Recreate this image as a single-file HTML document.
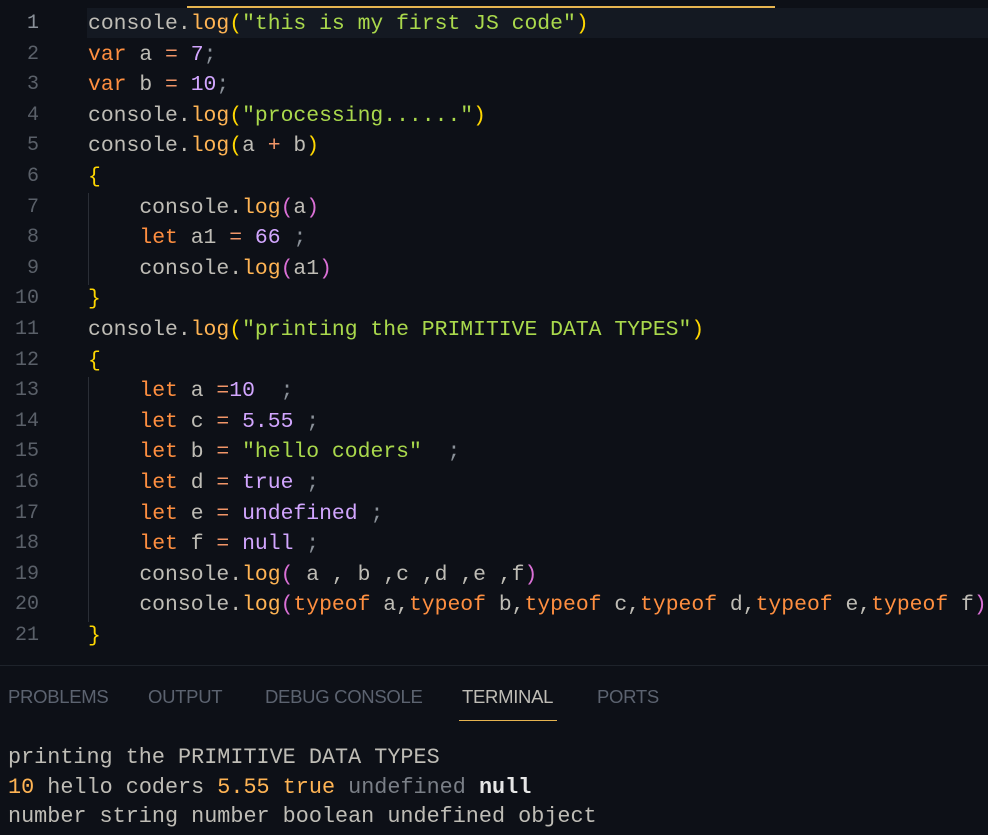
<!DOCTYPE html>
<html><head><meta charset="utf-8"><style>
*{margin:0;padding:0;box-sizing:border-box}
body{width:988px;height:835px;background:#0d1017;overflow:hidden;position:relative;font-family:"Liberation Mono",monospace;color:#bfbdb6}
.ln{position:absolute;left:0;width:39px;text-align:right;font-size:20px;color:#5a6069;line-height:30.6px}
.cl{position:absolute;left:88px;font-size:21.4px;line-height:30.6px;white-space:pre}
.k{color:#ff8f40}.f{color:#ffb454}.s{color:#aad94c}.n{color:#d2a6ff}.y{color:#ffd700}.p{color:#da70d6}.o{color:#f29668}.g{color:#8a9199}
.guide{position:absolute;left:88px;width:1px;background:#2a2e36}
.tab{position:absolute;top:686px;font-family:"Liberation Sans",sans-serif;font-size:18.5px;color:#5c6370;letter-spacing:-0.3px}
.t{position:absolute;left:8px;font-size:21.8px;white-space:pre;line-height:29px}
</style></head><body>
<div style="position:absolute;left:187px;top:6px;width:588px;height:2px;background:#e6b450"></div>
<div style="position:absolute;left:87px;top:8px;width:901px;height:30px;background:#141922"></div>
<div class="guide" style="top:193px;height:92px"></div>
<div class="guide" style="top:377px;height:245px"></div>
<div id="code"></div>
<script>
var L=[
'console.<span class="f">log</span><span class="y">(</span><span class="s">"this is my first JS code"</span><span class="y">)</span>',
'<span class="k">var</span> a <span class="o">=</span> <span class="n">7</span><span class="g">;</span>',
'<span class="k">var</span> b <span class="o">=</span> <span class="n">10</span><span class="g">;</span>',
'console.<span class="f">log</span><span class="y">(</span><span class="s">"processing......"</span><span class="y">)</span>',
'console.<span class="f">log</span><span class="y">(</span>a <span class="o">+</span> b<span class="y">)</span>',
'<span class="y">{</span>',
'    console.<span class="f">log</span><span class="p">(</span>a<span class="p">)</span>',
'    <span class="k">let</span> a1 <span class="o">=</span> <span class="n">66</span> <span class="g">;</span>',
'    console.<span class="f">log</span><span class="p">(</span>a1<span class="p">)</span>',
'<span class="y">}</span>',
'console.<span class="f">log</span><span class="y">(</span><span class="s">"printing the PRIMITIVE DATA TYPES"</span><span class="y">)</span>',
'<span class="y">{</span>',
'    <span class="k">let</span> a <span class="o">=</span><span class="n">10</span>  <span class="g">;</span>',
'    <span class="k">let</span> c <span class="o">=</span> <span class="n">5.55</span> <span class="g">;</span>',
'    <span class="k">let</span> b <span class="o">=</span> <span class="s">"hello coders"</span>  <span class="g">;</span>',
'    <span class="k">let</span> d <span class="o">=</span> <span class="n">true</span> <span class="g">;</span>',
'    <span class="k">let</span> e <span class="o">=</span> <span class="n">undefined</span> <span class="g">;</span>',
'    <span class="k">let</span> f <span class="o">=</span> <span class="n">null</span> <span class="g">;</span>',
'    console.<span class="f">log</span><span class="p">(</span> a , b ,c ,d ,e ,f<span class="p">)</span>',
'    console.<span class="f">log</span><span class="p">(</span><span class="k">typeof</span> a,<span class="k">typeof</span> b,<span class="k">typeof</span> c,<span class="k">typeof</span> d,<span class="k">typeof</span> e,<span class="k">typeof</span> f<span class="p">)</span>',
'<span class="y">}</span>'];
var h='';
for(var i=0;i<L.length;i++){var t=9+30.6*i;
h+='<div class="ln" style="top:'+t+'px;'+(i==0?'color:#8a9199':'')+'">'+(i+1)+'</div><div class="cl" style="top:'+t+'px">'+L[i]+'</div>';}
document.getElementById('code').innerHTML=h;
</script>
<div style="position:absolute;left:0;top:665px;width:988px;height:1px;background:#1e232b"></div>
<div class="tab" style="left:8px">PROBLEMS</div>
<div class="tab" style="left:148px">OUTPUT</div>
<div class="tab" style="left:265px">DEBUG CONSOLE</div>
<div class="tab" style="left:462px;color:#bfbdb6">TERMINAL</div>
<div style="position:absolute;left:459px;top:720px;width:98px;height:1px;background:#e6b450"></div>
<div class="tab" style="left:597px">PORTS</div>
<div class="t" style="top:743px">printing the PRIMITIVE DATA TYPES</div>
<div class="t" style="top:773px"><span style="color:#ffb454">10</span> hello coders <span style="color:#ffb454">5.55 true</span> <span style="color:#7a7f87">undefined</span> <b style="color:#e6e6e6">null</b></div>
<div class="t" style="top:802px">number string number boolean undefined object</div>
</body></html>
